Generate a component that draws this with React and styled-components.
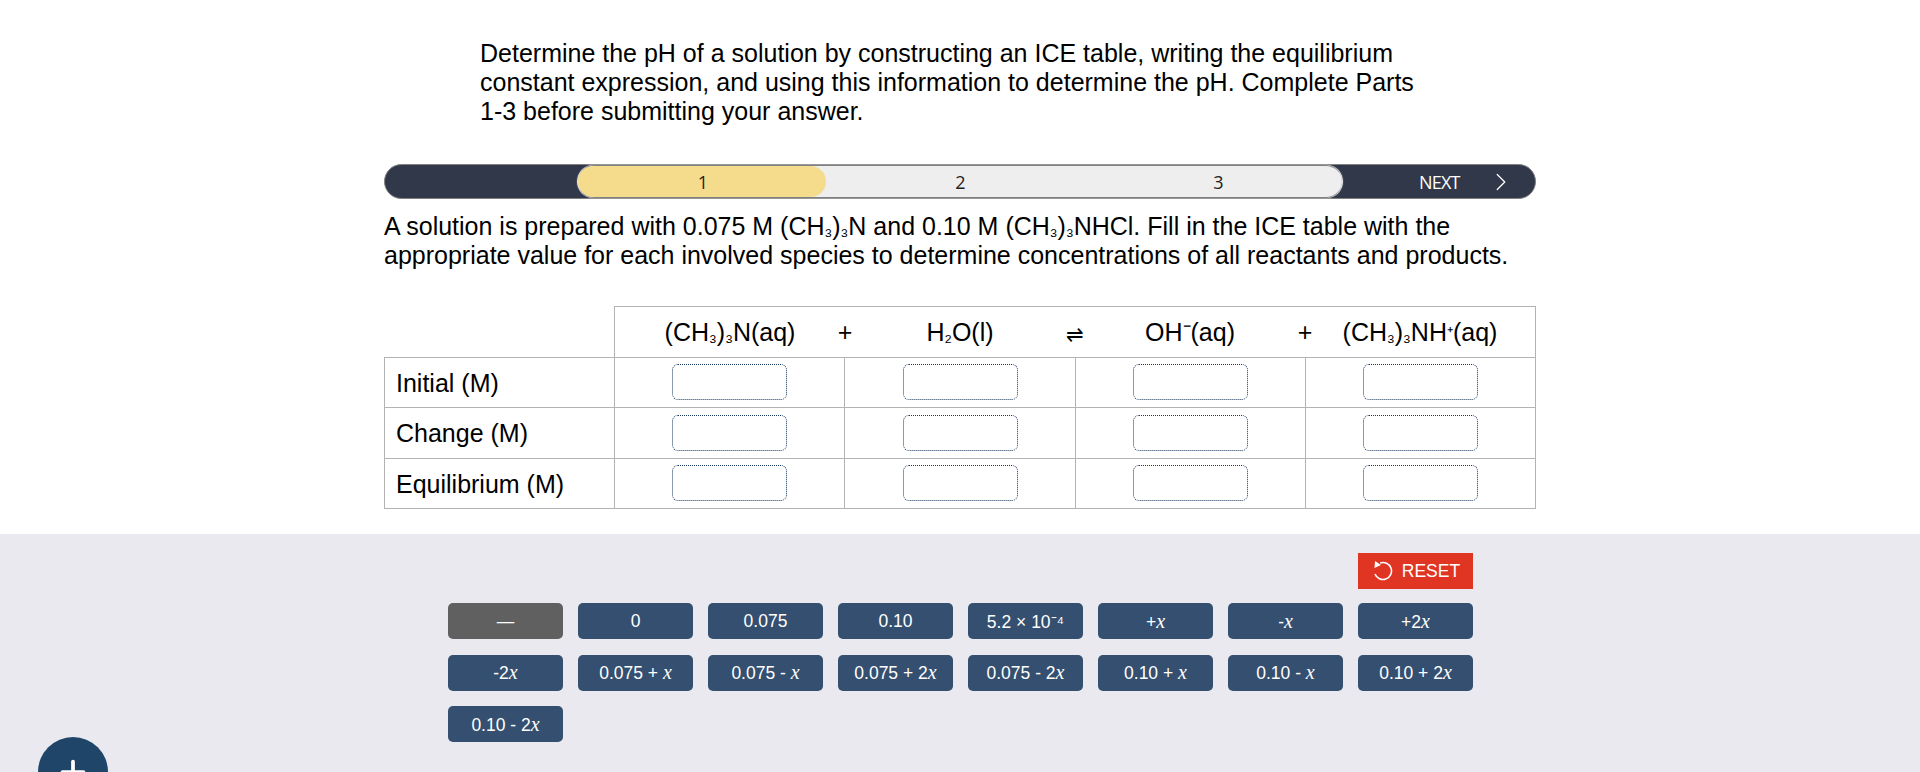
import styled, { createGlobalStyle } from "styled-components";
import { ChevronRight, Plus } from "lucide-react";

const GlobalStyle = createGlobalStyle`
  html, body {
    margin: 0;
    padding: 0;
    background: #fff;
    overflow: hidden;
    font-family: "Liberation Sans", Arial, sans-serif;
  }
`;

const species = [
  { name: "(CH₃)₃N(aq)", op: "+" },
  { name: "H₂O(l)", op: "⇌" },
  { name: "OH⁻(aq)", op: "+" },
  { name: "(CH₃)₃NH⁺(aq)" },
];

const rows = ["Initial (M)", "Change (M)", "Equilibrium (M)"];

const tiles = [
  ["0"],
  ["0.075"],
  ["0.10"],
  ["5.2 × 10⁻⁴"],
  ["+", "x"],
  ["-", "x"],
  ["+2", "x"],
  ["-2", "x"],
  ["0.075 + ", "x"],
  ["0.075 - ", "x"],
  ["0.075 + 2", "x"],
  ["0.075 - 2", "x"],
  ["0.10 + ", "x"],
  ["0.10 - ", "x"],
  ["0.10 + 2", "x"],
  ["0.10 - 2", "x"],
];

// the small sub/superscript glyphs in a formula get their own size
function Chem({ children }) {
  return children
    .split(/([₂₃⁺])/)
    .map((part, i) => (i % 2 ? <Tiny key={i}>{part}</Tiny> : part));
}

function ResetIcon() {
  return (
    <svg width="20" height="20" viewBox="0 0 20 20" fill="none">
      <path d="M7.1 2 A8.5 8.5 0 1 1 2 12.9" stroke="currentColor" strokeWidth="1.6" />
      <path d="M2 0 L1.5 7 L8 4 Z" fill="currentColor" />
    </svg>
  );
}

export default function App() {
  return (
    <Page>
      <GlobalStyle />
      <Content>
        <Intro>
          Determine the pH of a solution by constructing an ICE table, writing the equilibrium
          constant expression, and using this information to determine the pH. Complete Parts
          1-3 before submitting your answer.
        </Intro>
        <Progress>
          <Steps>
            <Step $active>1</Step>
            <Step>2</Step>
            <Step>3</Step>
          </Steps>
          <Next>
            NEXT
            <ChevronRight size={30} strokeWidth={1} />
          </Next>
        </Progress>
        <Prompt>
          A solution is prepared with 0.075 M <Chem>(CH₃)₃N</Chem> and 0.10 M{" "}
          <Chem>(CH₃)₃NHCl</Chem>. Fill in the ICE table with the appropriate value for each
          involved species to determine concentrations of all reactants and products.
        </Prompt>
        <IceTable>
          <colgroup>
            <col width="230" />
            <col width="230" />
            <col width="231" />
            <col width="230" />
            <col width="230" />
          </colgroup>
          <thead>
            <tr>
              <BlankCell />
              <HeaderCell colSpan={4}>
                <Reaction>
                  {species.map((s) => (
                    <Species key={s.name}>
                      <SpeciesName>
                        <Chem>{s.name}</Chem>
                      </SpeciesName>
                      {s.op && <Operator $arrow={s.op === "⇌"}>{s.op}</Operator>}
                    </Species>
                  ))}
                </Reaction>
              </HeaderCell>
            </tr>
          </thead>
          <tbody>
            {rows.map((row) => (
              <tr key={row}>
                <RowLabel>{row}</RowLabel>
                {species.map((s) => (
                  <DropCell key={s.name}>
                    <DropZone />
                  </DropCell>
                ))}
              </tr>
            ))}
          </tbody>
        </IceTable>
      </Content>
      <Tray>
        <TrayInner>
          <ResetRow>
            <ResetButton>
              <ResetIcon />
              RESET
            </ResetButton>
          </ResetRow>
          <TileGrid>
            <Tile $blank>—</Tile>
            {tiles.map(([text, variable]) => (
              <Tile key={text + (variable || "")}>
                {text}
                {variable && <Var>{variable}</Var>}
              </Tile>
            ))}
          </TileGrid>
        </TrayInner>
      </Tray>
      <Fab>
        <Plus size={36} strokeWidth={2.5} />
      </Fab>
    </Page>
  );
}

const Page = styled.div`
  position: relative;
  display: flex;
  flex-direction: column;
  height: 772px;
  overflow: hidden;
  color: #000;
`;

const Content = styled.main`
  width: 1152px;
  height: 534px;
  margin: 0 auto;
  padding-top: 39px;
  box-sizing: border-box;
`;

const Intro = styled.p`
  width: 960px;
  margin: 0 0 38px 96px;
  font-size: 25px;
  line-height: 29px;
`;

const Tiny = styled.span`
  display: inline-block;
  font-size: 19px;
  line-height: 19px;
`;

const Progress = styled.div`
  display: flex;
  align-items: stretch;
  height: 35px;
  padding-left: 193px;
  box-sizing: border-box;
  border: 1px solid #808080;
  border-radius: 18px;
  background: #30384a;
`;

const Steps = styled.div`
  display: grid;
  grid-template-columns: 248px 267px 249px;
  width: 764px;
  border-radius: 17px;
  background: #eee;
  border-top: 1px solid #808080;
  border-bottom: 1px solid #808080;
  box-sizing: border-box;
  box-shadow: 1px 0 1px #fff, -1px 0 1px #fff;
`;

const Step = styled.div`
  display: flex;
  align-items: center;
  justify-content: center;
  padding-left: 2px;
  border-radius: 16px;
  background: ${(p) => (p.$active ? "#f5dc8c" : "transparent")};
  font-family: "Open Sans", sans-serif;
  font-size: 18px;
  color: #222;
`;

const Next = styled.div`
  display: flex;
  align-items: center;
  gap: 26px;
  padding-left: 77px;
  font-family: "Open Sans", sans-serif;
  font-size: 18px;
  letter-spacing: -0.8px;
  color: #fff;
`;

const Prompt = styled.p`
  width: 1152px;
  margin: 13px 0 36px;
  font-size: 25px;
  line-height: 29px;
`;

const IceTable = styled.table`
  width: 1151px;
  table-layout: fixed;
  border-collapse: collapse;
  font-size: 25px;
`;

const BlankCell = styled.td`
  padding: 0;
  border: 0;
`;

const HeaderCell = styled.th`
  height: 50.5px;
  padding: 1px 0 0;
  box-sizing: border-box;
  border: 1px solid #b3b3b3;
  font-weight: 400;
`;

const Reaction = styled.div`
  display: grid;
  grid-template-columns: repeat(4, 1fr);
  line-height: 29px;
`;

const Species = styled.div`
  position: relative;
  text-align: center;
`;

const SpeciesName = styled.span`
  white-space: nowrap;
`;

const Operator = styled.span`
  position: absolute;
  top: ${(p) => (p.$arrow ? "2px" : "0")};
  right: -10px;
  width: 20px;
  text-align: center;
  font-size: ${(p) => (p.$arrow ? "21px" : "25px")};
`;

const RowLabel = styled.td`
  height: 50.5px;
  padding: 2px 0 0 11px;
  box-sizing: border-box;
  border: 1px solid #b3b3b3;
  line-height: 29px;
`;

const DropCell = styled.td`
  padding: 0;
  border: 1px solid #b3b3b3;
  text-align: center;
`;

const DropZone = styled.div`
  width: 115px;
  height: 36px;
  margin: 0 auto;
  box-sizing: border-box;
  border: 1px dotted #17375e;
  border-radius: 6px;
  background: #fff;
`;

const Tray = styled.section`
  flex: 1;
  background: #e9e9ef;
`;

const TrayInner = styled.div`
  width: 1025px;
  margin-left: 448px;
  padding-top: 19px;
`;

const ResetRow = styled.div`
  display: flex;
  justify-content: flex-end;
  margin-bottom: 14px;
`;

const ResetButton = styled.button`
  display: flex;
  align-items: center;
  justify-content: center;
  gap: 9px;
  width: 115px;
  height: 36px;
  padding: 0 0 0 2px;
  border: 0;
  background: #e03522;
  color: #fff;
  font-family: inherit;
  font-size: 17.5px;
`;

const TileGrid = styled.div`
  display: grid;
  grid-template-columns: repeat(8, 115px);
  grid-auto-rows: 36px;
  gap: 15.5px 15px;
`;

const Tile = styled.button`
  padding: 0;
  border: 0;
  border-radius: 5px;
  background: ${(p) => (p.$blank ? "#606060" : "#344f70")};
  color: #fff;
  font-family: inherit;
  font-size: 17.5px;
`;

const Var = styled.em`
  font-family: "Liberation Serif", serif;
  font-style: italic;
  font-size: 20px;
`;

const Fab = styled.button`
  position: absolute;
  left: 38px;
  top: 737px;
  display: flex;
  align-items: center;
  justify-content: center;
  width: 70px;
  height: 70px;
  padding: 0;
  border: 0;
  border-radius: 50%;
  background: #1f4568;
  color: #fff;
`;
